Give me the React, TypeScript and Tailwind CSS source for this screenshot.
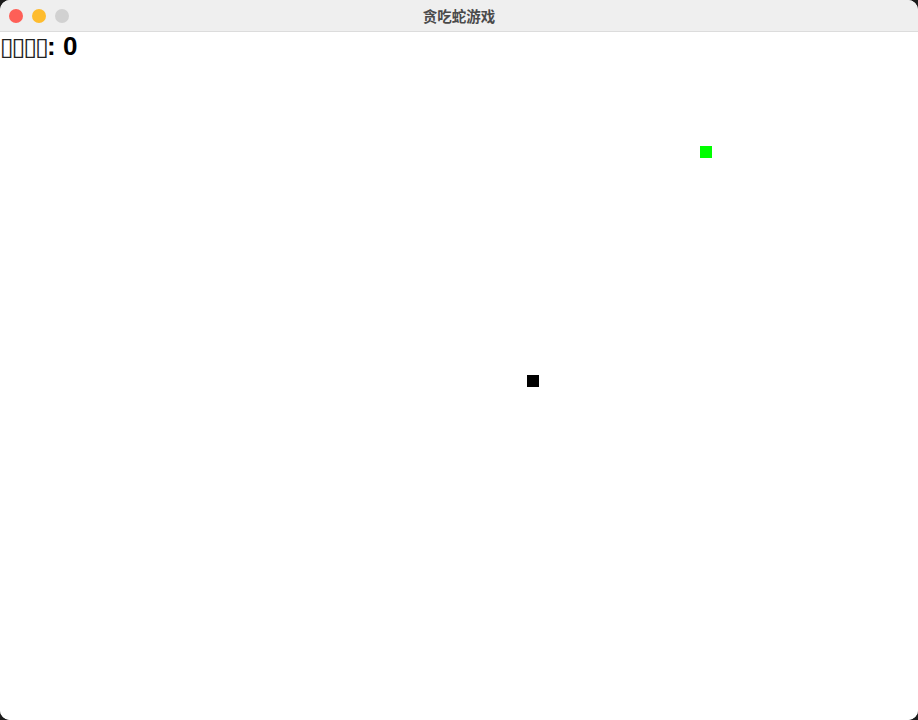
export default function App() {
  return (
    <div className="h-[720px] w-[918px] bg-[#1c1c1c]">
      <div className="flex h-full w-full flex-col overflow-hidden rounded-[10px] bg-white">
        {/* Title bar */}
        <div className="relative flex h-8 shrink-0 items-center justify-center border-b border-[#dcdcdc] bg-[#efefef]">
          <div className="absolute left-[9px] top-[9px] flex gap-[9px]">
            <span className="h-[14px] w-[14px] rounded-full bg-[#fe5f57]" />
            <span className="h-[14px] w-[14px] rounded-full bg-[#febc2e]" />
            <span className="h-[14px] w-[14px] rounded-full bg-[#d1d1d1]" />
          </div>
          <span className="text-[14.5px] font-bold text-[#4a4a4a] [font-family:'Noto_Sans_CJK_SC',sans-serif]">
            贪吃蛇游戏
          </span>
        </div>

        {/* Game canvas */}
        <div className="relative flex-1 bg-white">
          <div className="absolute left-0 top-[1px] text-[26px] leading-[26px] font-bold text-black [font-family:'Liberation_Sans',sans-serif]">
            <span className="text-[25px] font-normal tracking-[-2px] text-[#222] [font-family:'DejaVu_Sans',sans-serif]">▯▯▯▯</span>: 0
          </div>
          <div className="absolute left-[700px] top-[114px] h-3 w-3 bg-[#00ff00]" />
          <div className="absolute left-[527px] top-[343px] h-3 w-3 bg-black" />
        </div>
      </div>
    </div>
  )
}
